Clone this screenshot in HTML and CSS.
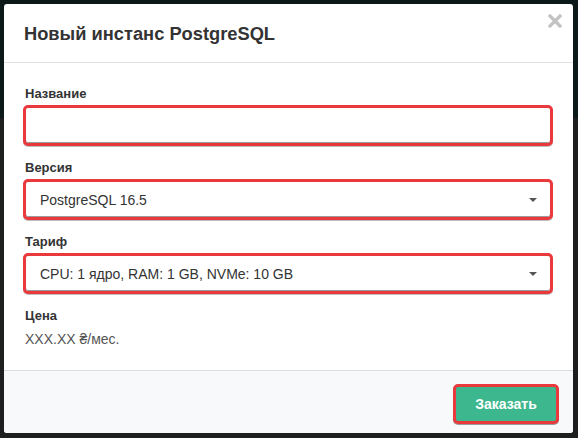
FILE: index.html
```html
<!DOCTYPE html>
<html lang="ru">
<head>
<meta charset="utf-8">
<title>Новый инстанс PostgreSQL</title>
<link rel="stylesheet" href="styles.css">
</head>
<body>
<div class="modal">
  <div class="modal-header">
    <h1 class="modal-title">Новый инстанс PostgreSQL</h1>
    <button class="close" aria-label="Закрыть">
      <svg width="14" height="14" viewBox="0 0 14 14"><path d="M2 2 L12 12 M12 2 L2 12" stroke="#c2c2c2" stroke-width="3.2" stroke-linecap="square"/></svg>
    </button>
  </div>
  <div class="modal-body">
    <div class="field">
      <label class="label">Название</label>
      <div class="control"><span class="control-text"></span></div>
    </div>
    <div class="field">
      <label class="label">Версия</label>
      <div class="control select"><span class="control-text">PostgreSQL 16.5</span><span class="caret"></span></div>
    </div>
    <div class="field">
      <label class="label">Тариф</label>
      <div class="control select"><span class="control-text">CPU: 1 ядро, RAM: 1 GB, NVMe: 10 GB</span><span class="caret"></span></div>
    </div>
    <div class="field">
      <label class="label">Цена</label>
      <div class="price">XXX.XX ₴/мес.</div>
    </div>
  </div>
  <div class="modal-footer">
    <button class="btn">Заказать</button>
  </div>
</div>
</body>
</html>
```
FILE: styles.css
```css
html, body {
  margin: 0;
  padding: 0;
}
body {
  width: 578px;
  height: 438px;
  background: linear-gradient(#0b1a19 0, #0b1a19 118px, #1d1e1e 118px);
  padding: 4px 5px 5px 4px;
  box-sizing: border-box;
  font-family: "Liberation Sans", Arial, sans-serif;
  color: #333;
}
.modal {
  width: 569px;
  height: 429px;
  background: #fff;
  border-radius: 3px;
  display: flex;
  flex-direction: column;
  overflow: hidden;
}
.modal-header {
  height: 58px;
  border-bottom: 1px solid #e2e2e2;
  display: flex;
  align-items: center;
  justify-content: space-between;
  padding: 0 12px 0 20px;
  position: relative;
}
.modal-title {
  margin: 0;
  font-size: 18.3px;
  font-weight: bold;
  color: #333;
  line-height: 20px;
  padding-top: 1px;
}
.close {
  position: absolute;
  top: 10px;
  right: 11px;
  border: 0;
  background: none;
  padding: 0;
  width: 14px;
  height: 14px;
}
.close svg { display: block; }
.modal-body {
  flex: 1;
  padding: 22px 20px 0 19px;
  display: flex;
  flex-direction: column;
  gap: 13px;
}
.field {
  display: flex;
  flex-direction: column;
  gap: 2px;
}
.label {
  font-size: 13px;
  font-weight: bold;
  line-height: 18px;
  color: #333;
  padding-left: 2px;
}
.control {
  height: 41px;
  box-sizing: border-box;
  border: 3px solid #e9393c;
  border-radius: 5px;
  box-shadow: inset 0 -1px 0 #9a9a9a, 0 1px 0 #bdbdbd;
  display: flex;
  align-items: center;
  padding: 0 12px 0 14px;
  background: #fff;
}
.control-text {
  flex: 1;
  font-size: 14px;
  color: #333;
  padding-top: 1px;
}
.caret {
  width: 0;
  height: 0;
  border-left: 4px solid transparent;
  border-right: 4px solid transparent;
  border-top: 4px solid #555;
  margin-right: 1px;
}
.price {
  font-size: 14px;
  line-height: 20px;
  color: #555;
  padding-left: 2px;
  padding-top: 2px;
}
.modal-footer {
  height: 63px;
  border-top: 1px solid #dcdde0;
  background: #f8f9fb;
  display: flex;
  align-items: center;
  justify-content: flex-end;
  padding: 0 14px 0 0;
  box-sizing: border-box;
}
.btn {
  width: 106px;
  height: 40px;
  border: 3px solid #e9393c;
  border-radius: 5px;
  background: #3db78d;
  color: #fff;
  font-family: "Liberation Sans", Arial, sans-serif;
  font-size: 14px;
  font-weight: bold;
  box-shadow: 0 1px 0 #9a9a9a;
  padding: 0;
  margin-top: 3px;
}
```
